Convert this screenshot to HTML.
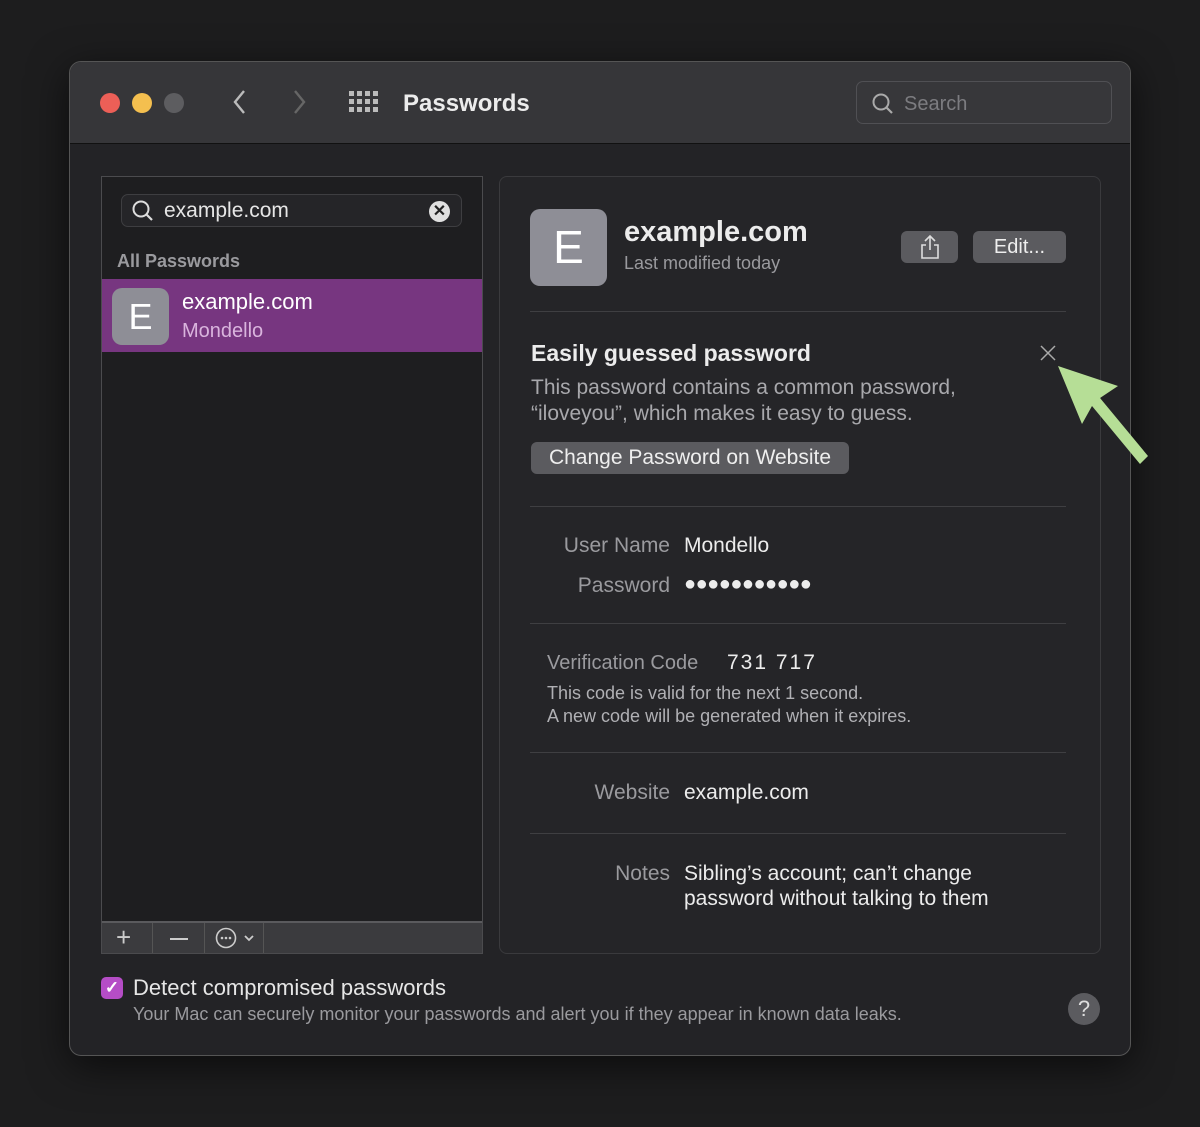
<!DOCTYPE html>
<html><head><meta charset="utf-8"><style>
*{margin:0;padding:0;box-sizing:border-box}
body{width:1200px;height:1127px;background:#1d1d1e;font-family:"Liberation Sans",sans-serif;position:relative;overflow:hidden;color:#e6e6e6}
.abs{position:absolute}
.win{left:69px;top:61px;width:1062px;height:995px;border-radius:12px;background:#232326;border:1px solid #555;overflow:hidden;box-shadow:0 10px 40px rgba(0,0,0,.6)}
.tb{left:0;top:0;width:100%;height:82px;background:#363639;border-bottom:1px solid #111}
.dot{width:20px;height:20px;border-radius:50%;top:31px}
.t{white-space:nowrap}
.sep{height:1px;background:#3f3f42}
.lbl{color:#9a9a9e;font-size:21px;text-align:right}
.val{color:#ececec;font-size:21px}
</style></head><body>
<div class="abs win">
 <div class="abs tb">
  <div class="abs dot" style="left:30px;background:#ec5f57"></div>
  <div class="abs dot" style="left:62px;background:#f4bf4f"></div>
  <div class="abs dot" style="left:94px;background:#5d5d60"></div>
  <svg class="abs" style="left:160px;top:26px" width="20" height="30"><path d="M14 3 L5 14 L14 25" stroke="#bbb" stroke-width="2.4" fill="none"/></svg>
  <svg class="abs" style="left:220px;top:26px" width="20" height="30"><path d="M5 3 L14 14 L5 25" stroke="#666" stroke-width="2.4" fill="none"/></svg>
  <svg class="abs" style="left:279px;top:29px" width="32" height="24" fill="#bbb">
   <rect x="0" y="0" width="5" height="5"/><rect x="8" y="0" width="5" height="5"/><rect x="16" y="0" width="5" height="5"/><rect x="24" y="0" width="5" height="5"/>
   <rect x="0" y="8" width="5" height="5"/><rect x="8" y="8" width="5" height="5"/><rect x="16" y="8" width="5" height="5"/><rect x="24" y="8" width="5" height="5"/>
   <rect x="0" y="16" width="5" height="5"/><rect x="8" y="16" width="5" height="5"/><rect x="16" y="16" width="5" height="5"/><rect x="24" y="16" width="5" height="5"/></svg>
  <div class="abs t" style="left:333px;top:28px;font-size:24px;font-weight:bold;color:#ececec">Passwords</div>
  <div class="abs" style="left:786px;top:19px;width:256px;height:43px;border:1px solid #505054;border-radius:7px;background:#37373a"></div>
  <svg class="abs" style="left:801px;top:30px" width="24" height="24"><circle cx="10" cy="10" r="7.5" stroke="#aaa" stroke-width="2" fill="none"/><path d="M15.5 15.5 L21 21" stroke="#aaa" stroke-width="2.2"/></svg>
  <div class="abs t" style="left:834px;top:31px;font-size:20px;color:#7c7c80">Search</div>
 </div>
 <div class="abs" style="left:31px;top:114px;width:382px;height:778px;border:1px solid #4b4b4e;background:#1e1e20"></div>
 <div class="abs" style="left:51px;top:132px;width:341px;height:33px;border:1px solid #3e3e41;border-radius:7px;background:#252528"></div>
 <svg class="abs" style="left:61px;top:137px" width="24" height="24"><circle cx="10" cy="10" r="7.5" stroke="#ddd" stroke-width="2" fill="none"/><path d="M15.5 15.5 L21 21" stroke="#ddd" stroke-width="2.2"/></svg>
 <div class="abs t" style="left:94px;top:137px;font-size:21px;color:#e6e6e6">example.com</div>
 <div class="abs" style="left:359px;top:139px;width:21px;height:21px;border-radius:50%;background:#e0e0e0;color:#222;font-size:16px;line-height:21px;text-align:center;font-weight:bold">✕</div>
 <div class="abs t" style="left:47px;top:189px;font-size:18px;font-weight:bold;color:#9a9a9e">All Passwords</div>
 <div class="abs" style="left:32px;top:217px;width:380px;height:73px;background:#773680"></div>
 <div class="abs" style="left:42px;top:226px;width:57px;height:57px;border-radius:10px;background:#8e8e96;color:#fff;font-size:36px;text-align:center;line-height:57px">E</div>
 <div class="abs t" style="left:112px;top:227px;font-size:22px;color:#fff">example.com</div>
 <div class="abs t" style="left:112px;top:258px;font-size:20px;color:#d9b4dd">Mondello</div>
 <div class="abs" style="left:32px;top:859px;width:380px;height:32px;background:#3b3b3e;border-top:2px solid #5a5a5d"></div>
 <div class="abs" style="left:82px;top:861px;width:1px;height:30px;background:#555"></div>
 <div class="abs" style="left:134px;top:861px;width:1px;height:30px;background:#555"></div>
 <div class="abs" style="left:193px;top:861px;width:1px;height:30px;background:#555"></div>
 <div class="abs t" style="left:46px;top:860px;font-size:26px;color:#ccc">+</div>
 <div class="abs" style="left:100px;top:876px;width:18px;height:2px;background:#ccc"></div>
 <svg class="abs" style="left:144px;top:864px" width="46" height="26"><circle cx="12" cy="12" r="9.5" stroke="#ccc" stroke-width="1.6" fill="none"/><circle cx="8" cy="12" r="1.3" fill="#ccc"/><circle cx="12" cy="12" r="1.3" fill="#ccc"/><circle cx="16" cy="12" r="1.3" fill="#ccc"/><path d="M31 10 L35 14 L39 10" stroke="#ccc" stroke-width="1.8" fill="none"/></svg>
 <div class="abs" style="left:429px;top:114px;width:602px;height:778px;border:1px solid #3a3a3d;border-radius:8px;background:#252528"></div>
 <div class="abs" style="left:460px;top:147px;width:77px;height:77px;border-radius:10px;background:#8e8e96;color:#fff;font-size:46px;text-align:center;line-height:77px">E</div>
 <div class="abs t" style="left:554px;top:154px;font-size:29px;font-weight:bold;color:#ececec">example.com</div>
 <div class="abs t" style="left:554px;top:191px;font-size:18px;color:#9a9a9e">Last modified today</div>
 <div class="abs" style="left:831px;top:169px;width:57px;height:32px;border-radius:6px;background:#5b5b5f"></div>
 <svg class="abs" style="left:849px;top:171px" width="22" height="28"><path d="M11 3 V17 M6 8 L11 3 L16 8" stroke="#ddd" stroke-width="1.6" fill="none"/><path d="M7 12 H3 V25 H19 V12 H15" stroke="#ddd" stroke-width="1.6" fill="none"/></svg>
 <div class="abs" style="left:903px;top:169px;width:93px;height:32px;border-radius:6px;background:#5b5b5f;color:#eee;font-size:20px;text-align:center;line-height:32px">Edit...</div>
 <div class="abs sep" style="left:460px;top:249px;width:536px"></div>
 <div class="abs t" style="left:461px;top:278px;font-size:23px;font-weight:bold;color:#ececec">Easily guessed password</div>
 <svg class="abs" style="left:968px;top:281px" width="20" height="20"><path d="M3 3 L17 17 M17 3 L3 17" stroke="#aaa" stroke-width="1.5"/></svg>
 <div class="abs t" style="left:461px;top:313px;font-size:21px;line-height:26px;color:#a8a8ac">This password contains a common password,<br>“iloveyou”, which makes it easy to guess.</div>
 <div class="abs t" style="left:461px;top:380px;width:318px;height:32px;border-radius:6px;background:#5b5b5f;color:#eee;font-size:21px;text-align:center;line-height:31px">Change Password on Website</div>
 <div class="abs sep" style="left:460px;top:444px;width:536px"></div>
 <div class="abs lbl t" style="left:430px;width:170px;top:472px">User Name</div>
 <div class="abs val t" style="left:614px;top:472px">Mondello</div>
 <div class="abs lbl t" style="left:430px;width:170px;top:512px">Password</div>
 <div class="abs val t" style="left:614px;top:511px;font-size:20px;letter-spacing:-0.5px">●●●●●●●●●●●</div>
 <div class="abs sep" style="left:460px;top:561px;width:536px"></div>
 <div class="abs t" style="left:477px;top:590px;font-size:20px;color:#9a9a9e">Verification Code</div>
 <div class="abs t" style="left:657px;top:589px;font-size:21px;color:#ececec;letter-spacing:2px">731 717</div>
 <div class="abs t" style="left:477px;top:620px;font-size:18px;line-height:23px;color:#b0b0b4">This code is valid for the next 1 second.<br>A new code will be generated when it expires.</div>
 <div class="abs sep" style="left:460px;top:690px;width:536px"></div>
 <div class="abs lbl t" style="left:430px;width:170px;top:719px">Website</div>
 <div class="abs val t" style="left:614px;top:719px">example.com</div>
 <div class="abs sep" style="left:460px;top:771px;width:536px"></div>
 <div class="abs lbl t" style="left:430px;width:170px;top:800px">Notes</div>
 <div class="abs val t" style="left:614px;top:799px;line-height:25px">Sibling’s account; can’t change<br>password without talking to them</div>
 <div class="abs" style="left:31px;top:915px;width:22px;height:22px;border-radius:5px;background:#b54dc6;color:#fff;font-size:17px;text-align:center;line-height:22px;font-weight:bold">✓</div>
 <div class="abs t" style="left:63px;top:913px;font-size:22px;color:#e6e6e6">Detect compromised passwords</div>
 <div class="abs t" style="left:63px;top:942px;font-size:18px;color:#9a9a9e">Your Mac can securely monitor your passwords and alert you if they appear in known data leaks.</div>
 <div class="abs" style="left:998px;top:931px;width:32px;height:32px;border-radius:50%;background:#5b5b5f;color:#ddd;font-size:22px;text-align:center;line-height:32px">?</div>
</div>
<svg class="abs" style="left:1050px;top:360px" width="110" height="110"><path d="M8 6 L68 26 L50 38 L98 96 L90 104 L42 46 L32 64 Z" fill="#b6de96"/></svg>
</body></html>
